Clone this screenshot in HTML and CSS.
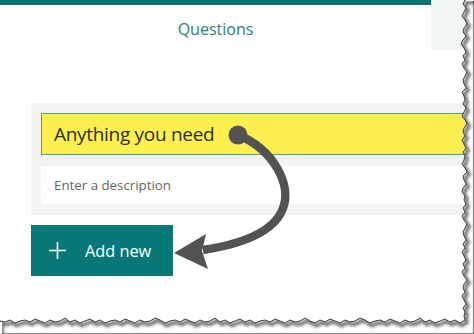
FILE: index.html
```html
<!DOCTYPE html>
<html>
<head>
<meta charset="utf-8">
<link rel="stylesheet" href="styles.css">
</head>
<body>
<div class="sheet">
  <div class="topbar">
    <div class="tabs"><span class="tab">Questions</span></div>
    <div class="side"></div>
  </div>
  <div class="main">
    <div class="card">
      <div class="title">Anything you need</div>
      <div class="desc">Enter a description</div>
    </div>
    <button class="btn">
      <svg class="plus" width="19" height="19" viewBox="0 0 19 19"><path d="M9.5 1V18M1 9.5H18" stroke="#fff" stroke-width="1.6" fill="none"/></svg>
      <span>Add new</span>
    </button>
  </div>
  <svg class="arrow" width="474" height="334" viewBox="0 0 474 334">
    <path d="M238,135 C275,150 290,185 284,205 C277,232 242,244 203,250" stroke="#535353" stroke-width="8.5" fill="none"/>
    <circle cx="238" cy="135" r="9.5" fill="#535353"/>
    <polygon points="174,253 206,234 202,251 208,269" fill="#535353"/>
  </svg>
  <svg class="torn" width="474" height="334" viewBox="0 0 474 334">
    <defs>
      <filter id="blur" x="-10%" y="-10%" width="120%" height="120%"><feGaussianBlur stdDeviation="1.6"/></filter>
      <clipPath id="outside"><path id="outpath" d="M474,0 L465,0 L463,4 L466,8 L464,12 L462,16 L465,20 L467,24 L464,28 L463,32 L466,36 L463,40 L461,44 L464,48 L466,52 L463,56 L465,60 L462,64 L464,68 L467,72 L465,76 L463,80 L464,84 L466,88 L462,92 L464,96 L465,100 L463,104 L466,108 L464,112 L462,116 L465,120 L467,124 L464,128 L463,132 L465,136 L462,140 L464,144 L466,148 L463,152 L465,156 L464,160 L462,164 L465,168 L467,172 L463,176 L464,180 L466,184 L463,188 L462,192 L465,196 L464,200 L466,204 L463,208 L465,212 L462,216 L464,220 L467,224 L465,228 L463,232 L464,236 L466,240 L463,244 L465,248 L462,252 L464,256 L466,260 L463,264 L465,268 L462,272 L464,276 L467,280 L464,284 L463,288 L465,292 L462,296 L464,300 L466,304 L463,308 L465,312 L464,316 L465,320 L460,323 L455,320 L450,322 L445,319 L440,321 L435,323 L430,320 L425,322 L420,318 L415,321 L410,322 L405,320 L400,323 L395,321 L390,319 L385,322 L380,320 L375,321 L370,323 L365,320 L360,318 L355,321 L350,322 L345,320 L340,323 L335,321 L330,319 L325,322 L320,320 L315,323 L310,321 L305,318 L300,321 L295,322 L290,320 L285,323 L280,321 L275,319 L270,322 L265,320 L260,321 L255,323 L250,320 L245,322 L240,319 L235,321 L230,323 L225,320 L220,322 L215,318 L210,321 L205,322 L200,320 L195,323 L190,321 L185,319 L180,322 L175,320 L170,321 L165,323 L160,320 L155,318 L150,321 L145,322 L140,320 L135,323 L130,321 L125,319 L120,322 L115,320 L110,321 L105,323 L100,320 L95,322 L90,319 L85,321 L80,323 L75,320 L70,322 L65,318 L60,321 L55,322 L50,320 L45,323 L40,321 L35,319 L30,322 L25,320 L20,321 L15,323 L10,320 L5,322 L0,321 L0,334 L474,334 Z"/></clipPath>
    </defs>
    <use href="#outpath" fill="#fff"/>
    <g clip-path="url(#outside)">
      <use href="#outpath" fill="none" stroke="#6a6a6a" stroke-width="3.5" transform="translate(2,2.5)" filter="url(#blur)"/>
    </g>
    <use href="#outpath" fill="none" stroke="#3c3c3c" stroke-width="1"/>
    <rect x="0" y="322" width="2" height="12" fill="#fff"/>
    <rect x="466" y="0" width="8" height="1" fill="#fff"/>
  </svg>
</div>
</body>
</html>
```
FILE: styles.css
```css
html, body {
  margin: 0;
  padding: 0;
  background: #fff;
}
body {
  width: 474px;
  height: 334px;
  overflow: hidden;
  font-family: "Open Sans", "Noto Sans", sans-serif;
}
.sheet {
  position: relative;
  width: 474px;
  height: 334px;
  overflow: hidden;
}
.topbar {
  display: flex;
  height: 50px;
}
.tabs {
  flex: 1;
  border-top: 5px solid #0b7171;
  display: flex;
  justify-content: center;
  padding-top: 14px;
}
.tab {
  font-size: 16px;
  line-height: 20px;
  height: 20px;
  color: #2e7d79;
}
.side {
  width: 43px;
  background: #f0f5f6;
}
.main {
  padding: 53px 0 0 31px;
}
.card {
  background: #f3f3f3;
  padding: 10px 0 11px 10px;
  display: flex;
  flex-direction: column;
  gap: 11px;
}
.title {
  box-sizing: border-box;
  height: 42px;
  background: #fdef50;
  border: 1px solid #4f9f8e;
  padding-left: 12px;
  font-size: 19px;
  letter-spacing: -0.3px;
  line-height: 40px;
  color: #2f2f2a;
}
.desc {
  height: 38px;
  background: #fff;
  padding-left: 13px;
  font-size: 13.3px;
  line-height: 38px;
  color: #666;
}
.btn {
  margin-top: 10px;
  width: 142px;
  height: 51px;
  border: 0;
  background: #077876;
  color: #fff;
  display: flex;
  align-items: center;
  gap: 18px;
  padding: 0 0 0 17px;
  font-family: "Open Sans", "Noto Sans", sans-serif;
  font-size: 16.3px;
  cursor: pointer;
}
.btn .plus {
  flex: none;
}
.arrow, .torn {
  position: absolute;
  left: 0;
  top: 0;
  pointer-events: none;
}
```
